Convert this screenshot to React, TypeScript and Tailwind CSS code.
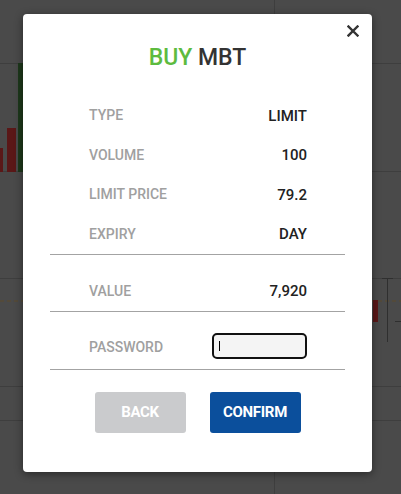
import React from "react";

const rows = [
  { label: "TYPE", value: "LIMIT" },
  { label: "VOLUME", value: "100" },
  { label: "LIMIT PRICE", value: "79.2" },
  { label: "EXPIRY", value: "DAY" },
];

function ChartBackdrop() {
  return (
    <svg className="absolute inset-0" width="401" height="494" viewBox="0 0 401 494">
      {/* grid */}
      {[63, 171, 278, 386, 420].map((y) => (
        <line key={y} x1="0" x2="401" y1={y + 0.5} y2={y + 0.5} stroke="#3e3e3e" strokeWidth="1" />
      ))}
      <line x1="274.5" x2="274.5" y1="0" y2="494" stroke="#3e3e3e" strokeWidth="1" />
      {/* volume bars */}
      <rect x="0" y="148" width="3" height="24" fill="#5a1717" />
      <rect x="7" y="128" width="9" height="44" fill="#5a1717" />
      <rect x="18" y="63" width="5" height="109" fill="#1d381b" />
      {/* last price line */}
      <line x1="0" x2="401" y1="301" y2="301" stroke="#5c4a2a" strokeWidth="1" strokeDasharray="4 3" />
      {/* candle */}
      <rect x="373" y="300" width="5" height="22" fill="#5a1717" />
      <line x1="387.5" x2="387.5" y1="278" y2="342" stroke="#2f2f2f" strokeWidth="1" />
      <line x1="382" x2="393" y1="278.5" y2="278.5" stroke="#2f2f2f" strokeWidth="1" />
      <line x1="395" x2="401" y1="321.5" y2="321.5" stroke="#2f2f2f" strokeWidth="1" />
    </svg>
  );
}

export default function App() {
  return (
    <div
      className="relative w-[401px] h-[494px] overflow-hidden bg-[#4a4a4a]"
      style={{ fontFamily: "Roboto, 'Liberation Sans', sans-serif" }}
    >
      <ChartBackdrop />

      {/* Order confirmation modal */}
      <div className="absolute left-[23px] top-[14px] w-[349px] bg-white rounded-[4px] shadow-[0_2px_8px_rgba(0,0,0,0.45)] px-[27px] pt-[30px] pb-[39px]">
        <button className="absolute right-[13px] top-[11px] w-[12px] h-[12px] text-[#333]">
          <svg viewBox="0 0 12 12" width="12" height="12">
            <path d="M1.5 1.5l9 9M10.5 1.5l-9 9" stroke="currentColor" strokeWidth="2.4" strokeLinecap="square" />
          </svg>
        </button>

        <h2 className="text-center text-[23px] leading-[28px] font-medium text-[#333]">
          <span className="text-[#5dbb3f]">BUY</span> MBT
        </h2>

        <div className="mt-[24px] border-b border-[#a3a3a3]">
          {rows.map((r) => (
            <div key={r.label} className="h-[39.5px] pl-[39px] pr-[38px] flex items-center justify-between">
              <span className="text-[14px] font-medium text-[#a0a0a0]">{r.label}</span>
              <span className="text-[15px] font-medium text-[#222]">{r.value}</span>
            </div>
          ))}
        </div>

        <div className="pt-[16px] border-b border-[#a3a3a3]">
          <div className="h-[40px] pl-[39px] pr-[38px] flex items-center justify-between">
            <span className="text-[14px] font-medium text-[#a0a0a0]">VALUE</span>
            <span className="text-[15px] font-medium text-[#222]">7,920</span>
          </div>
        </div>

        <div className="pt-[14px] border-b border-[#a3a3a3]">
          <div className="h-[43px] pl-[39px] pr-[38px] flex items-center justify-between">
            <span className="text-[14px] font-medium text-[#a0a0a0]">PASSWORD</span>
            <div className="w-[95px] h-[26px] rounded-[5px] border-2 border-[#111] bg-[#f4f4f4] flex items-center pl-[5px] mb-[4px]">
              <span className="w-[1px] h-[10px] bg-black" />
            </div>
          </div>
        </div>

        <div className="mt-[22px] flex justify-center gap-[24px]">
          <button className="w-[91px] h-[41px] rounded-[3px] bg-[#cacbcd] text-white text-[15px] font-bold tracking-[-0.3px]">
            BACK
          </button>
          <button className="w-[91px] h-[41px] rounded-[3px] bg-[#0b4f9c] text-white text-[15px] font-bold tracking-[-0.3px]">
            CONFIRM
          </button>
        </div>
      </div>
    </div>
  );
}
